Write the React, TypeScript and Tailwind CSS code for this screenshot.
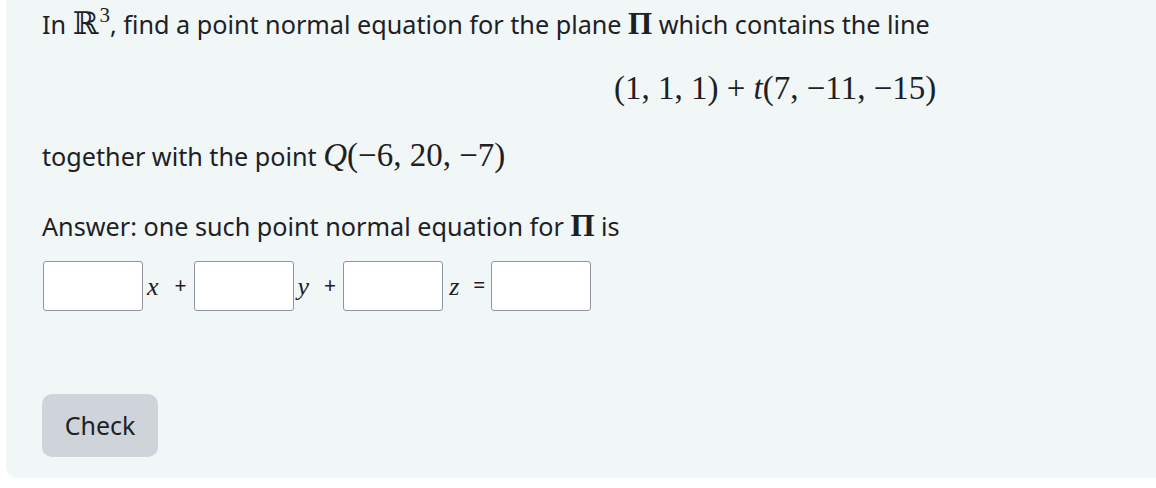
import React from "react";

const M = "font-['Liberation_Serif','DejaVu_Serif',serif]";

function Box() {
  return <div className="w-[100px] h-[50px] bg-white border border-[#8f959e] rounded-[3px] shrink-0" />;
}

export default function App() {
  return (
    <div className="w-[1156px] h-[488px] bg-white font-['Noto_Sans','Open_Sans',sans-serif] text-[#1d2125] overflow-hidden">
      <div className="ml-[6px] w-[1160px] h-[478px] bg-[#f1f6f7] rounded-bl-[12px] pl-[36px] pt-[6px]">
        <div className="text-[25.2px] h-[36px] leading-[36px] flex items-baseline whitespace-nowrap">
          <span>In&nbsp;</span>
          <span className={`${M} text-[31px] leading-[36px]`}>ℝ<span className="text-[21px] relative -top-[12px] ml-[1px]">3</span></span>
          <span>, find a point normal equation for the plane&nbsp;</span>
          <span className={`${M} text-[31px] leading-[36px] font-bold`}>Π</span>
          <span>&nbsp;which contains the line</span>
        </div>
        <div className={`${M} text-[33px] h-[40px] leading-[40px] mt-[26px] ml-[572px] whitespace-nowrap`}>
          (1, 1, 1) + <i>t</i>(7, −11, −15)
        </div>
        <div className="text-[25.2px] h-[36px] leading-[36px] mt-[29px] flex items-baseline whitespace-nowrap">
          <span>together with the point&nbsp;</span>
          <span className={`${M} text-[33px] leading-[36px]`}><i>Q</i>(−6, 20, −7)</span>
        </div>
        <div className="text-[25.2px] h-[36px] leading-[36px] mt-[35px] flex items-baseline whitespace-nowrap">
          <span>Answer: one such point normal equation for&nbsp;</span>
          <span className={`${M} text-[31px] leading-[36px] font-bold`}>Π</span>
          <span>&nbsp;is</span>
        </div>
        <div className="flex items-center mt-[17px] ml-[1px] text-[21px]">
          <Box />
          <span className={`${M} italic text-[26px] ml-[4px]`}>x</span>
          <span className="ml-[16px] mr-[7px]">+</span>
          <Box />
          <span className={`${M} italic text-[26px] ml-[4px]`}>y</span>
          <span className="ml-[15px] mr-[7px]">+</span>
          <Box />
          <span className={`${M} italic text-[26px] ml-[6px]`}>z</span>
          <span className="ml-[14px] mr-[6px]">=</span>
          <Box />
        </div>
        <button className="mt-[83px] w-[116px] h-[63px] bg-[#ced4da] rounded-[10px] text-[25px] text-[#1d2125]">
          Check
        </button>
      </div>
    </div>
  );
}
